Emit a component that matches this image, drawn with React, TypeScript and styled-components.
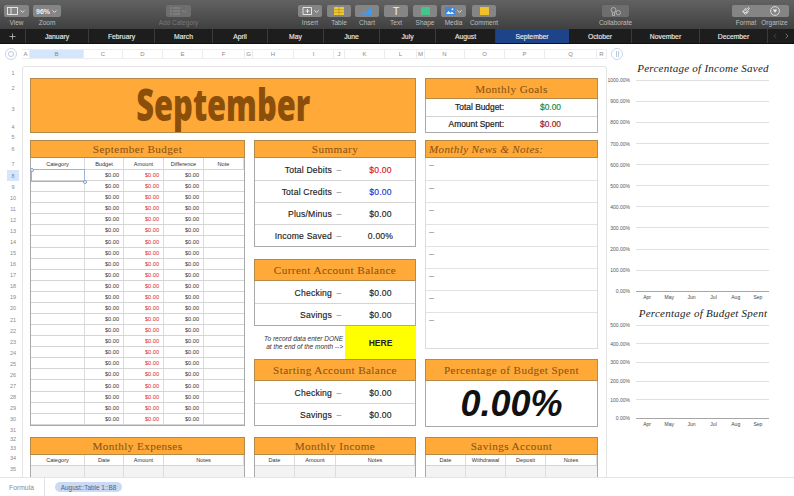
import styled, { createGlobalStyle } from 'styled-components';
import { ChevronDown, ChevronLeft, ChevronRight, Paintbrush, Plus } from 'lucide-react';

const GlobalStyle = createGlobalStyle`
  html, body { margin: 0; padding: 0; background: #fff; overflow: hidden; }
  * { box-sizing: border-box; }
  body { font-family: 'Liberation Sans', Arial, sans-serif; }
`;

const ORANGE = '#ffa939';
const SERIF = "'Liberation Serif', 'DejaVu Serif', serif";

const MONTH_TABS = [
  { name: 'January', w: 63 },
  { name: 'February', w: 66 },
  { name: 'March', w: 58 },
  { name: 'April', w: 55 },
  { name: 'May', w: 56 },
  { name: 'June', w: 56 },
  { name: 'July', w: 56 },
  { name: 'August', w: 60 },
  { name: 'September', w: 73, active: true },
  { name: 'October', w: 63 },
  { name: 'November', w: 68 },
  { name: 'December', w: 68 },
];

const COLUMNS = [
  ['A', 8], ['B', 54], ['C', 39], ['D', 40], ['E', 40], ['F', 42], ['G', 8], ['H', 41], ['I', 40],
  ['J', 11], ['K', 40], ['L', 32], ['M', 8], ['N', 40], ['O', 40], ['P', 40], ['Q', 52], ['R', 10],
] as const;

const ROW_HEADS: number[] = [
  11, 20, 22, 13, 7, 18, 12, ...Array(23).fill(11.09), 10, 9, 9, 10, 12,
];

const INCOME_TICKS = ['1000.00%', '900.00%', '800.00%', '700.00%', '600.00%', '500.00%', '400.00%', '300.00%', '200.00%', '100.00%', '0.00%'];
const BUDGET_TICKS = ['500.00%', '400.00%', '300.00%', '200.00%', '100.00%', '0.00%'];
const CHART_MONTHS = ['Apr', 'May', 'Jun', 'Jul', 'Aug', 'Sep'];

const Page = styled.div`
  width: 794px;
  height: 496px;
  display: flex;
  flex-direction: column;
  overflow: hidden;
  background: #fff;
`;

const Toolbar = styled.div`
  height: 29px;
  display: flex;
  padding-top: 5px;
  background: linear-gradient(#626262, #404040);
`;

const Tool = styled.div<{ $w: number; $ml?: number }>`
  width: ${(p) => p.$w}px;
  margin-left: ${(p) => p.$ml ?? 0}px;
  display: flex;
  flex-direction: column;
  align-items: center;
`;

const ToolButton = styled.div<{ $dim?: boolean; $joined?: 'left' | 'right'; $glyph?: boolean }>`
  width: 100%;
  height: 12px;
  display: flex;
  align-items: center;
  justify-content: center;
  gap: 1px;
  border-radius: ${(p) => (p.$joined === 'left' ? '2px 0 0 2px' : p.$joined === 'right' ? '0 2px 2px 0' : '2px')};
  background: ${(p) => (p.$dim ? '#6e6e6e' : '#858585')};
  color: ${(p) => (p.$dim ? '#8c8c8c' : '#eee')};
  font-size: ${(p) => (p.$glyph ? 11 : 7)}px;
  font-weight: ${(p) => (p.$glyph ? 400 : 700)};
`;

const ToolLabel = styled.span<{ $dim?: boolean }>`
  margin-top: 2px;
  white-space: nowrap;
  font-size: 6.5px;
  line-height: 8px;
  color: ${(p) => (p.$dim ? '#777' : '#bdbdbd')};
`;

const Tabs = styled.div`
  height: 15px;
  flex-shrink: 0;
  display: flex;
  background: #1d1d1d;
  border-bottom: 1px solid #111;
`;

const PlusCell = styled.div`
  width: 26px;
  display: flex;
  align-items: center;
  justify-content: center;
  color: #c8c8c8;
  border-right: 1px solid #3a3a3a;
`;

const Tab = styled.div<{ $w: number; $active?: boolean }>`
  width: ${(p) => p.$w}px;
  display: flex;
  align-items: center;
  justify-content: center;
  font-size: 6.8px;
  color: #e6e6e6;
  -webkit-text-stroke: 0.15px #e6e6e6;
  background: ${(p) => (p.$active ? '#1d4488' : 'transparent')};
  border-right: 1px solid ${(p) => (p.$active ? '#1d4488' : '#3a3a3a')};
`;

const TabArrows = styled.div`
  flex: 1;
  display: flex;
  align-items: center;
  justify-content: center;
  gap: 4px;
`;

const ColumnBar = styled.div`
  height: 18px;
  flex-shrink: 0;
  display: flex;
  align-items: center;
  padding-top: 2px;
`;

const RoundHandle = styled.div<{ $ml: number; $w?: number }>`
  width: ${(p) => p.$w ?? 12}px;
  height: 12px;
  margin-left: ${(p) => p.$ml}px;
  display: flex;
  align-items: center;
  justify-content: center;
  border: 1px solid #ccd6e6;
  border-radius: 6px;
`;

const HandleDot = styled.div`
  width: 6px;
  height: 6px;
  border: 1px solid #b9c9e2;
  border-radius: 50%;
`;

const HandleBars = styled.div`
  width: 3px;
  height: 6px;
  border-left: 1px solid #b9c9e2;
  border-right: 1px solid #b9c9e2;
`;

const ColumnHeads = styled.div`
  margin-left: 5px;
  height: 10px;
  display: flex;
  border: 1px solid #eee;
  border-width: 1px 0;
`;

const ColumnHead = styled.div<{ $w: number; $active?: boolean }>`
  width: ${(p) => p.$w}px;
  display: flex;
  align-items: center;
  justify-content: center;
  font-size: 6px;
  color: #888;
  background: ${(p) => (p.$active ? '#d5e5fb' : '#fff')};
  border-right: 1px solid #ececec;
`;

const Body = styled.div`
  flex: 1;
  min-height: 0;
  display: flex;
  overflow: hidden;
`;

const RowHeads = styled.div`
  width: 22px;
  flex-shrink: 0;
  padding: 5px 3px 0 7px;
  display: flex;
  flex-direction: column;
`;

const RowHead = styled.div<{ $h: number; $active?: boolean }>`
  height: ${(p) => p.$h}px;
  display: flex;
  align-items: center;
  justify-content: center;
  flex-shrink: 0;
  font-size: 5.5px;
  color: #8a8a8a;
  background: ${(p) => (p.$active ? '#d5e5fb' : 'transparent')};
`;

const Sheet = styled.div`
  width: 585px;
  height: 100%;
  flex-shrink: 0;
  margin-top: 4px;
  padding: 11px 0 0 7px;
  display: flex;
  flex-direction: column;
  gap: 10px;
  border: 1px solid #e6e6e6;
  border-bottom: none;
  border-radius: 3px 3px 0 0;
  overflow: hidden;
`;

const SheetTop = styled.div`
  display: flex;
  flex-shrink: 0;
  gap: 9px;
`;

const MainBlock = styled.div`
  width: 386px;
  display: flex;
  flex-direction: column;
  gap: 7px;
`;

const TitleBanner = styled.div`
  height: 55px;
  display: flex;
  align-items: center;
  justify-content: center;
  padding-bottom: 3px;
  background: ${ORANGE};
  border: 1px solid #b58a48;
`;

const TitleText = styled.span`
  display: inline-block;
  transform: scaleX(0.7);
  font-family: 'Open Sans', sans-serif;
  font-weight: 800;
  font-size: 44px;
  line-height: 50px;
  color: #8c4f0a;
`;

const MainSplit = styled.div`
  display: flex;
  gap: 9px;
`;

const Stack = styled.div<{ $w: number; $gap?: number }>`
  width: ${(p) => p.$w}px;
  flex-shrink: 0;
  display: flex;
  flex-direction: column;
  gap: ${(p) => p.$gap ?? 0}px;
`;

const Panel = styled.div<{ $light?: boolean; $mt?: number }>`
  position: relative;
  margin-top: ${(p) => p.$mt ?? 0}px;
  display: flex;
  flex-direction: column;
  border: 1px solid ${(p) => (p.$light ? '#dcdcdc' : '#a9a9a9')};
  border-top: none;
  background: #fff;
`;

const PanelHead = styled.div<{ $h: number; $size?: number; $italic?: boolean }>`
  height: ${(p) => p.$h}px;
  flex-shrink: 0;
  margin: 0 -1px;
  display: flex;
  align-items: center;
  justify-content: ${(p) => (p.$italic ? 'flex-start' : 'center')};
  padding-left: ${(p) => (p.$italic ? '3px' : '0')};
  background: ${ORANGE};
  border: 1px solid #b58a48;
  font-family: ${SERIF};
  font-size: ${(p) => p.$size ?? 11.2}px;
  font-style: ${(p) => (p.$italic ? 'italic' : 'normal')};
  letter-spacing: 0.4px;
  color: #8c5414;
  -webkit-text-stroke: 0.08px #8c5414;
`;

const StatRow = styled.div`
  height: 22px;
  padding-top: 1px;
  display: grid;
  grid-template-columns: 77px 14px 1fr;
  align-items: center;
  font-size: 8.6px;
  letter-spacing: 0.2px;
  color: #222;
  -webkit-text-stroke: 0.15px #222;
  & + & { border-top: 1px solid #d4d4d4; }
`;

const StatLabel = styled.span`
  text-align: right;
`;

const StatDash = styled.span`
  text-align: center;
  color: #888;
  -webkit-text-stroke: 0;
`;

const StatValue = styled.span<{ $color?: string }>`
  text-align: center;
  color: ${(p) => p.$color ?? '#222'};
  -webkit-text-stroke-color: ${(p) => p.$color ?? '#222'};
`;

const GoalRow = styled.div`
  height: 16.5px;
  display: grid;
  grid-template-columns: 78px 1fr;
  align-items: center;
  font-size: 8.4px;
  color: #222;
  -webkit-text-stroke: 0.2px #222;
  & + & { border-top: 1px solid #d4d4d4; }
`;

const NoteRow = styled.div<{ $h?: number }>`
  height: ${(p) => p.$h ?? 22}px;
  padding: 2px 0 0 3px;
  font-size: 9px;
  line-height: 11px;
  color: #888;
  & + & { border-top: 1px solid #e2e2e2; }
`;

const RecordRow = styled.div`
  height: 33px;
  display: grid;
  grid-template-columns: 1fr 71px;
`;

const RecordHint = styled.div`
  padding-right: 2px;
  display: flex;
  flex-direction: column;
  justify-content: center;
  align-items: flex-end;
  font-size: 6.5px;
  line-height: 8px;
  font-style: italic;
  color: #333;
`;

const HereCell = styled.div`
  display: flex;
  align-items: center;
  justify-content: center;
  background: #ffff00;
  font-size: 8.5px;
  font-weight: 700;
  color: #222;
`;

const BigPercent = styled.div`
  height: 45px;
  display: flex;
  align-items: center;
  justify-content: center;
  font-size: 36px;
  font-weight: 700;
  font-style: italic;
  color: #111;
`;

const Grid = styled.div<{ $cols: string }>`
  display: grid;
  grid-template-columns: ${(p) => p.$cols};
`;

const HeadCell = styled.div<{ $h?: number }>`
  height: ${(p) => p.$h ?? 12}px;
  display: flex;
  align-items: center;
  justify-content: center;
  font-size: 5.6px;
  color: #333;
  border-right: 1px solid #dcdcdc;
  border-bottom: 1px solid #d4d4d4;
  &:last-child { border-right: none; }
`;

const Cell = styled.div<{ $color?: string; $last?: boolean }>`
  height: 11.09px;
  padding-right: 4px;
  display: flex;
  align-items: center;
  justify-content: flex-end;
  font-size: 5.6px;
  color: ${(p) => p.$color ?? '#333'};
  border-right: ${(p) => (p.$last ? 'none' : '1px solid #dcdcdc')};
  border-bottom: 1px solid #d4d4d4;
`;

const GrayCell = styled.div`
  height: 14px;
  background: #f3f3f3;
  border-right: 1px solid #dcdcdc;
  &:last-child { border-right: none; }
`;

const Selection = styled.div`
  position: absolute;
  left: 0;
  top: 29px;
  width: 54px;
  height: 13px;
  border: 1px solid #9db4d8;
`;

const SelectionDot = styled.div<{ $end?: boolean }>`
  position: absolute;
  width: 4px;
  height: 4px;
  left: ${(p) => (p.$end ? '51px' : '-2px')};
  top: ${(p) => (p.$end ? '10px' : '-2px')};
  border: 1px solid #7f9cc9;
  border-radius: 50%;
  background: #fff;
`;

const Charts = styled.div`
  flex: 1;
  display: flex;
  flex-direction: column;
`;

const ChartTitle = styled.div<{ $mt?: number }>`
  width: 192px;
  height: 12px;
  margin-top: ${(p) => p.$mt ?? 0}px;
  text-align: center;
  white-space: nowrap;
  font-family: ${SERIF};
  font-size: 11px;
  line-height: 12px;
  font-style: italic;
  letter-spacing: 0.25px;
  color: #222;
`;

const Plot = styled.div<{ $gap: number; $mt: number }>`
  margin-top: ${(p) => p.$mt}px;
  display: flex;
  flex-direction: column;
  gap: ${(p) => p.$gap}px;
`;

const PlotRow = styled.div`
  height: 6px;
  display: grid;
  grid-template-columns: 23px 6px 133px;
  align-items: center;
`;

const Tick = styled.span`
  text-align: right;
  white-space: nowrap;
  font-size: 5px;
  color: #555;
`;

const GridLine = styled.div<{ $base?: boolean }>`
  grid-column: 3;
  height: 1px;
  background: ${(p) => (p.$base ? '#a6a6a6' : '#e0e0e0')};
`;

const MonthAxis = styled.div`
  height: 6px;
  margin-left: 29px;
  width: 133px;
  display: grid;
  grid-template-columns: repeat(6, 1fr);
  align-items: center;
  justify-items: center;
  font-size: 5px;
  color: #444;
`;

const FormulaBar = styled.div`
  height: 19px;
  flex-shrink: 0;
  display: flex;
  align-items: center;
  border-top: 1px solid #e4e4e4;
  background: #fff;
  position: relative;
`;

const FormulaLabel = styled.div`
  width: 45px;
  height: 100%;
  padding-left: 9px;
  display: flex;
  align-items: center;
  font-size: 6.8px;
  color: #8b8b8b;
  border-right: 1px solid #e4e4e4;
`;

const RefPill = styled.div`
  margin-left: 10px;
  height: 10px;
  width: 67px;
  display: flex;
  align-items: center;
  justify-content: center;
  border-radius: 5px;
  background: #cbd9f3;
  font-size: 6.4px;
  color: #54607a;
`;

function IconSidebar() {
  return (
    <svg width="11" height="8" viewBox="0 0 11 8" fill="none" stroke="#eee" strokeWidth="0.9">
      <rect x="0.5" y="0.5" width="10" height="7" />
      <path d="M4 0.5v7" />
    </svg>
  );
}

function IconList() {
  return (
    <svg width="10" height="8" viewBox="0 0 10 8" stroke="#8c8c8c" strokeWidth="1">
      <path d="M0 1h2M3 1h7M0 4h2M3 4h7M0 7h2M3 7h7" />
    </svg>
  );
}

function IconInsert() {
  return (
    <svg width="11" height="8" viewBox="0 0 11 8" fill="none" stroke="#eee" strokeWidth="0.9">
      <path d="M2 0.5h8.500v7H2z" />
      <path d="M6.500 2v4M4.500 4h4" />
    </svg>
  );
}

function IconTable() {
  return (
    <svg width="10" height="8" viewBox="0 0 10 8">
      <rect width="10" height="8" rx="0.5" fill="#f5c92b" />
      <path d="M0 2.700h10M0 5.300h10M5 0v8" stroke="#8a7a40" strokeWidth="0.5" />
    </svg>
  );
}

function IconChart() {
  return (
    <svg width="10" height="8" viewBox="0 0 10 8" fill="#3f9bf0">
      <rect x="0" y="5.500" width="2" height="2.500" />
      <rect x="2.700" y="4" width="2" height="4" />
      <rect x="5.400" y="2" width="2" height="6" />
      <rect x="8" y="0" width="2" height="8" />
    </svg>
  );
}

function IconMedia() {
  return (
    <svg width="10" height="8" viewBox="0 0 10 8">
      <rect width="10" height="8" fill="#3d86e0" />
      <path d="M1 7l2.500-3 2 2 1.500-1.500L9 7z" fill="#e8f2ff" />
      <circle cx="7.500" cy="2.200" r="1" fill="#e8f2ff" />
    </svg>
  );
}

function IconCollaborate() {
  return (
    <svg width="11" height="9" viewBox="0 0 11 9" fill="none" stroke="#bcbcbc" strokeWidth="0.8">
      <circle cx="3.500" cy="3" r="2.500" />
      <path d="M2.500 5.500v3h2v-3" />
      <circle cx="8.300" cy="5.700" r="2.200" />
    </svg>
  );
}

function IconOrganize() {
  return (
    <svg width="10" height="10" viewBox="0 0 10 10">
      <circle cx="5" cy="5" r="4.400" fill="none" stroke="#eee" strokeWidth="0.8" />
      <path d="M2.800 3.600h4.400L5 6.800z" fill="#eee" />
    </svg>
  );
}

const Swatch = styled.div<{ $color: string }>`
  width: 9px;
  height: 8px;
  background: ${(p) => p.$color};
`;

const Chevron = () => <ChevronDown size={7} strokeWidth={3} />;

function StatPanelRow({ label, value, color }: { label: string; value: string; color?: string }) {
  return (
    <StatRow>
      <StatLabel>{label}</StatLabel>
      <StatDash>–</StatDash>
      <StatValue $color={color}>{value}</StatValue>
    </StatRow>
  );
}

function BottomTable({ title, cols, heads }: { title: string; cols: string; heads: string[] }) {
  return (
    <Panel>
      <PanelHead $h={18}>{title}</PanelHead>
      <Grid $cols={cols}>
        {heads.map((h) => (
          <HeadCell key={h} $h={11}>{h}</HeadCell>
        ))}
        {heads.map((h) => (
          <GrayCell key={h} />
        ))}
      </Grid>
    </Panel>
  );
}

function Chart({ ticks, gap, mt }: { ticks: string[]; gap: number; mt: number }) {
  return (
    <>
      <Plot $gap={gap} $mt={mt}>
        {ticks.map((t, i) => (
          <PlotRow key={t}>
            <Tick>{t}</Tick>
            <GridLine $base={i === ticks.length - 1} />
          </PlotRow>
        ))}
      </Plot>
      <MonthAxis>
        {CHART_MONTHS.map((m) => (
          <span key={m}>{m}</span>
        ))}
      </MonthAxis>
    </>
  );
}

export default function App() {
  return (
    <Page>
      <GlobalStyle />
      <Toolbar>
        <Tool $w={25} $ml={4}>
          <ToolButton><IconSidebar /><Chevron /></ToolButton>
          <ToolLabel>View</ToolLabel>
        </Tool>
        <Tool $w={28} $ml={4}>
          <ToolButton>96%<Chevron /></ToolButton>
          <ToolLabel>Zoom</ToolLabel>
        </Tool>
        <Tool $w={25} $ml={105}>
          <ToolButton $dim><IconList /><Chevron /></ToolButton>
          <ToolLabel $dim>Add Category</ToolLabel>
        </Tool>
        <Tool $w={24} $ml={107}>
          <ToolButton><IconInsert /><Chevron /></ToolButton>
          <ToolLabel>Insert</ToolLabel>
        </Tool>
        <Tool $w={24} $ml={5}>
          <ToolButton><IconTable /></ToolButton>
          <ToolLabel>Table</ToolLabel>
        </Tool>
        <Tool $w={24} $ml={4}>
          <ToolButton><IconChart /></ToolButton>
          <ToolLabel>Chart</ToolLabel>
        </Tool>
        <Tool $w={24} $ml={5}>
          <ToolButton $glyph>T</ToolButton>
          <ToolLabel>Text</ToolLabel>
        </Tool>
        <Tool $w={24} $ml={5}>
          <ToolButton><Swatch $color="#45c48c" /></ToolButton>
          <ToolLabel>Shape</ToolLabel>
        </Tool>
        <Tool $w={25} $ml={4}>
          <ToolButton><IconMedia /><Chevron /></ToolButton>
          <ToolLabel>Media</ToolLabel>
        </Tool>
        <Tool $w={24} $ml={6}>
          <ToolButton><Swatch $color="#f0c12c" /></ToolButton>
          <ToolLabel>Comment</ToolLabel>
        </Tool>
        <Tool $w={27} $ml={106}>
          <ToolButton $dim><IconCollaborate /></ToolButton>
          <ToolLabel>Collaborate</ToolLabel>
        </Tool>
        <Tool $w={28} $ml={103}>
          <ToolButton $joined="left"><Paintbrush size={8} strokeWidth={2.500} /></ToolButton>
          <ToolLabel>Format</ToolLabel>
        </Tool>
        <Tool $w={29}>
          <ToolButton $joined="right"><IconOrganize /></ToolButton>
          <ToolLabel>Organize</ToolLabel>
        </Tool>
      </Toolbar>

      <Tabs>
        <PlusCell><Plus size={9} strokeWidth={2} /></PlusCell>
        {MONTH_TABS.map((t) => (
          <Tab key={t.name} $w={t.w} $active={t.active}>{t.name}</Tab>
        ))}
        <TabArrows>
          <ChevronLeft size={8} color="#555" strokeWidth={2} />
          <ChevronRight size={8} color="#999" strokeWidth={2} />
        </TabArrows>
      </Tabs>

      <ColumnBar>
        <RoundHandle $ml={5}><HandleDot /></RoundHandle>
        <ColumnHeads>
          {COLUMNS.map(([name, w]) => (
            <ColumnHead key={name} $w={w} $active={name === 'B'}>{name}</ColumnHead>
          ))}
        </ColumnHeads>
        <RoundHandle $ml={4}><HandleBars /></RoundHandle>
      </ColumnBar>

      <Body>
        <RowHeads>
          {ROW_HEADS.map((h, i) => (
            <RowHead key={i} $h={h} $active={i === 7}>{i + 1}</RowHead>
          ))}
        </RowHeads>
        <Sheet>
          <SheetTop>
            <MainBlock>
              <TitleBanner><TitleText>September</TitleText></TitleBanner>
              <MainSplit>
                <Stack $w={215}>
                  <Panel>
                    <PanelHead $h={18}>September Budget</PanelHead>
                    <Grid $cols="54px 39px 40px 40px 1fr">
                      {['Category', 'Budget', 'Amount', 'Difference', 'Note'].map((h) => (
                        <HeadCell key={h}>{h}</HeadCell>
                      ))}
                      {Array.from({ length: 23 }).flatMap((_, row) => [
                        <Cell key={`${row}a`} />,
                        <Cell key={`${row}b`}>$0.00</Cell>,
                        <Cell key={`${row}c`} $color="#d8262c">$0.00</Cell>,
                        <Cell key={`${row}d`}>$0.00</Cell>,
                        <Cell key={`${row}e`} $last />,
                      ])}
                    </Grid>
                    <Selection>
                      <SelectionDot />
                      <SelectionDot $end />
                    </Selection>
                  </Panel>
                </Stack>
                <Stack $w={162}>
                  <Panel>
                    <PanelHead $h={18}>Summary</PanelHead>
                    <StatPanelRow label="Total Debits" value="$0.00" color="#e0141c" />
                    <StatPanelRow label="Total Credits" value="$0.00" color="#1238d8" />
                    <StatPanelRow label="Plus/Minus" value="$0.00" />
                    <StatPanelRow label="Income Saved" value="0.00%" />
                  </Panel>
                  <Panel $mt={12}>
                    <PanelHead $h={22}>Current Account Balance</PanelHead>
                    <StatPanelRow label="Checking" value="$0.00" />
                    <StatPanelRow label="Savings" value="$0.00" />
                  </Panel>
                  <RecordRow>
                    <RecordHint>
                      <span>To record data enter DONE</span>
                      <span>at the end of the month --&gt;</span>
                    </RecordHint>
                    <HereCell>HERE</HereCell>
                  </RecordRow>
                  <Panel>
                    <PanelHead $h={22}>Starting Account Balance</PanelHead>
                    <StatPanelRow label="Checking" value="$0.00" />
                    <StatPanelRow label="Savings" value="$0.00" />
                  </Panel>
                </Stack>
              </MainSplit>
            </MainBlock>
            <Stack $w={173} $gap={7}>
              <Panel>
                <PanelHead $h={21}>Monthly Goals</PanelHead>
                <GoalRow>
                  <StatLabel>Total Budget:</StatLabel>
                  <StatValue $color="#1f8a4c">$0.00</StatValue>
                </GoalRow>
                <GoalRow>
                  <StatLabel>Amount Spent:</StatLabel>
                  <StatValue $color="#a01c20">$0.00</StatValue>
                </GoalRow>
              </Panel>
              <Panel $light>
                <PanelHead $h={18} $size={11} $italic>Monthly News &amp; Notes:</PanelHead>
                {[22, 22, 22, 22, 22, 22, 22, 36].map((h, i) => (
                  <NoteRow key={i} $h={h}>–</NoteRow>
                ))}
              </Panel>
              <Panel $mt={3}>
                <PanelHead $h={22}>Percentage of Budget Spent</PanelHead>
                <BigPercent>0.00%</BigPercent>
              </Panel>
            </Stack>
          </SheetTop>
          <SheetTop>
            <Stack $w={215}>
              <BottomTable title="Monthly Expenses" cols="54px 39px 40px 1fr" heads={['Category', 'Date', 'Amount', 'Notes']} />
            </Stack>
            <Stack $w={162}>
              <BottomTable title="Monthly Income" cols="40px 41px 1fr" heads={['Date', 'Amount', 'Notes']} />
            </Stack>
            <Stack $w={173}>
              <BottomTable title="Savings Account" cols="40px 40px 40px 1fr" heads={['Date', 'Withdrawal', 'Deposit', 'Notes']} />
            </Stack>
          </SheetTop>
        </Sheet>
        <Charts>
          <ChartTitle>Percentage of Income Saved</ChartTitle>
          <Chart ticks={INCOME_TICKS} gap={15.100} mt={3.300} />
          <ChartTitle $mt={7}>Percentage of Budget Spent</ChartTitle>
          <Chart ticks={BUDGET_TICKS} gap={12.600} mt={3} />
        </Charts>
      </Body>

      <FormulaBar>
        <FormulaLabel>Formula</FormulaLabel>
        <RefPill>August::Table 1::B8</RefPill>
      </FormulaBar>
    </Page>
  );
}
